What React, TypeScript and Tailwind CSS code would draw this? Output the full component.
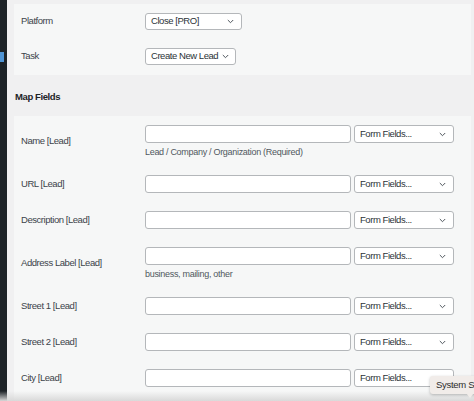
import React from "react";

const Chevron = () => (
  <svg width="7" height="5" viewBox="0 0 7 5" className="shrink-0">
    <path d="M0.8 1 L3.5 3.7 L6.2 1" fill="none" stroke="#50575e" strokeWidth="1" />
  </svg>
);

const Select = ({ text, w, h = "h-[18px]" }: { text: string; w: string; h?: string }) => (
  <div
    className={`${w} ${h} bg-white border border-[#b4b7ba] rounded-[3px] flex items-center justify-between pl-[5px] pr-[7px] text-[9.5px] tracking-[-0.45px] text-[#2c3338] shrink-0`}
  >
    <span className="whitespace-nowrap">{text}</span>
    <Chevron />
  </div>
);

const Input = () => (
  <div className="w-[206px] h-[18px] bg-white border border-[#b4b7ba] rounded-[3px] shrink-0" />
);

type Row = { label: string; help?: string };

const rows: Row[] = [
  { label: "Name [Lead]", help: "Lead / Company / Organization (Required)" },
  { label: "URL [Lead]" },
  { label: "Description [Lead]" },
  { label: "Address Label [Lead]", help: "business, mailing, other" },
  { label: "Street 1 [Lead]" },
  { label: "Street 2 [Lead]" },
  { label: "City [Lead]" },
];

export default function App() {
  return (
    <div
      className="relative w-[474px] h-[401px] overflow-hidden flex bg-[#f0f0f1]"
      style={{ fontFamily: "'Liberation Sans', Arial, sans-serif" }}
    >
      <div className="w-[7px] shrink-0 bg-[#1d2327] flex flex-col">
        <div className="mt-[52px] h-[10px] w-[4px] bg-[#4f94d4]" />
      </div>
      <div className="flex-1 pl-[7px] pr-[3px] pt-[4px] flex flex-col">
        <div className="bg-[#f6f7f7] h-[71px] pt-[9px] pl-[7px] flex flex-col gap-[18px]">
          <div className="flex items-center">
            <div className="w-[124px] text-[9.5px] tracking-[-0.45px] text-[#3c434a]">Platform</div>
            <Select text="Close [PRO]" w="w-[97px]" h="h-[17px]" />
          </div>
          <div className="flex items-center">
            <div className="w-[124px] text-[9.5px] tracking-[-0.45px] text-[#3c434a]">Task</div>
            <div className="h-[17px] bg-white border border-[#b4b7ba] rounded-[3px] flex items-center gap-[4px] pl-[5px] pr-[6px] text-[9.5px] tracking-[-0.45px] text-[#2c3338]">
              <span className="whitespace-nowrap">Create New Lead</span>
              <Chevron />
            </div>
          </div>
        </div>
        <div className="h-[41px] flex items-center pt-[3px] pl-[1px] text-[9.5px] tracking-[-0.4px] font-bold text-[#1d2327]">
          Map Fields
        </div>
        <div className="bg-[#f6f7f7] flex-1 pl-[7px]">
          {rows.map((r) => (
            <div key={r.label} className="flex items-center py-[9px]">
              <div className="w-[124px] text-[9.5px] tracking-[-0.45px] text-[#3c434a] shrink-0">{r.label}</div>
              <div className="flex flex-col">
                <div className="flex gap-[3px]">
                  <Input />
                  <Select text="Form Fields..." w="w-[100px]" />
                </div>
                {r.help && (
                  <div className="mt-[4px] h-[10px] leading-[10px] text-[9px] tracking-[-0.3px] text-[#50575e] whitespace-nowrap">
                    {r.help}
                  </div>
                )}
              </div>
            </div>
          ))}
        </div>
      </div>
      <div className="absolute left-0 right-0 bottom-0 h-[10px] bg-gradient-to-b from-transparent to-[#d9d9d9] pointer-events-none" />
      <div className="absolute left-[430px] top-[376px] h-[18px] w-[60px] bg-[#f1ece9] rounded-[3px] shadow-[0_1px_3px_rgba(0,0,0,0.25)] flex items-center pl-[6px] text-[9.5px] tracking-[-0.3px] text-[#2c2c2c] whitespace-nowrap overflow-hidden">
        System Settings
      </div>
      <div className="absolute left-[466px] top-[393px] w-0 h-0 border-l-[4px] border-r-[4px] border-t-[5px] border-l-transparent border-r-transparent border-t-[#f1ece9]" />
    </div>
  );
}
